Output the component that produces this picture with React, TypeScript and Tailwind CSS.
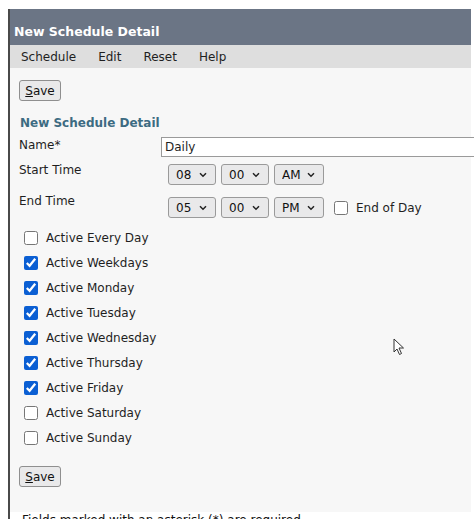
import { useState } from 'react'

const days = [
  { label: 'Active Every Day', checked: false },
  { label: 'Active Weekdays', checked: true },
  { label: 'Active Monday', checked: true },
  { label: 'Active Tuesday', checked: true },
  { label: 'Active Wednesday', checked: true },
  { label: 'Active Thursday', checked: true },
  { label: 'Active Friday', checked: true },
  { label: 'Active Saturday', checked: false },
  { label: 'Active Sunday', checked: false },
]

function SaveButton() {
  return (
    <button className="h-[21px] w-[42px] rounded-[3px] border border-[#8f8f8f] bg-[#e9e9ea] text-[12px] leading-none text-[#111]">
      <span className="underline">S</span>ave
    </button>
  )
}

function TimeSelect({ value, options, wide }: { value: string; options: string[]; wide?: boolean }) {
  return (
    <div className="relative">
      <select
        defaultValue={value}
        className={
          'h-[21px] appearance-none rounded-[3px] border border-[#9a9a9a] bg-[#e9e9ea] pl-[7px] text-[12px] text-[#111] outline-none ' +
          (wide ? 'w-[50px]' : 'w-[48px]')
        }
      >
        {options.map((o) => (
          <option key={o}>{o}</option>
        ))}
      </select>
      <svg
        className="pointer-events-none absolute right-[9px] top-[8px]"
        width="8"
        height="6"
        viewBox="0 0 8 6"
      >
        <path d="M1 1.2 L4 4.2 L7 1.2" fill="none" stroke="#222" strokeWidth="1.5" />
      </svg>
    </div>
  )
}

export default function App() {
  const [checks, setChecks] = useState(days.map((d) => d.checked))
  const [endOfDay, setEndOfDay] = useState(false)

  return (
    <div className="relative h-[519px] w-[474px] overflow-hidden bg-white pt-[9px] pl-[8px] pr-[3px] font-['DejaVu_Sans',Verdana,sans-serif] text-[12px] leading-[16px] text-[#1f1f1f]">
      <div className="border-l-2 border-[#4a4a4a]">
        {/* Title bar */}
        <div className="flex h-[36px] items-end bg-[#6b7585] pb-[5px] pl-[4px] text-[12.5px] font-bold leading-[16px] text-white">
          New Schedule Detail
        </div>

        {/* Menu */}
        <div className="flex h-[23px] items-center gap-[22px] bg-[#dedede] pl-[11px]">
          <span>Schedule</span>
          <span>Edit</span>
          <span>Reset</span>
          <span>Help</span>
        </div>

        <div className="bg-[#f7f7f7] pl-[9px] pb-[25px]">
          <div className="pt-[12px]">
            <SaveButton />
          </div>

          <div className="mt-[14px] pl-[1px] font-bold text-[#3d6b82]">New Schedule Detail</div>

          <div className="mt-[6px] flex items-start">
            <span className="w-[142px] shrink-0">Name*</span>
            <input
              defaultValue="Daily"
              className="-mr-[20px] h-[20px] w-[320px] shrink-0 border border-[#9a9a9a] bg-white pl-[3px] text-[12px] outline-none"
            />
          </div>

          <div className="mt-[5px] flex items-start">
            <span className="w-[149px]">Start Time</span>
            <div className="mt-[2px] flex gap-[5px]">
              <TimeSelect value="08" options={['08']} />
              <TimeSelect value="00" options={['00']} />
              <TimeSelect value="AM" options={['AM', 'PM']} wide />
            </div>
          </div>

          <div className="mt-[8px] flex items-start">
            <span className="w-[149px]">End Time</span>
            <div className="mt-[4px] flex items-center gap-[5px]">
              <TimeSelect value="05" options={['05']} />
              <TimeSelect value="00" options={['00']} />
              <TimeSelect value="PM" options={['AM', 'PM']} wide />
              <label className="ml-[5px] flex items-center gap-[8px]">
                <input
                  type="checkbox"
                  checked={endOfDay}
                  onChange={() => setEndOfDay(!endOfDay)}
                  className="m-0 h-[14px] w-[14px] accent-[#0b5fd3]"
                />
                End of Day
              </label>
            </div>
          </div>

          <div className="mt-[7px] flex flex-col pl-[5px]">
            {days.map((d, i) => (
              <label key={d.label} className="flex h-[25px] items-center gap-[8px]">
                <input
                  type="checkbox"
                  checked={checks[i]}
                  onChange={() => setChecks(checks.map((c, j) => (j === i ? !c : c)))}
                  className="m-0 h-[14px] w-[14px] accent-[#0b5fd3]"
                />
                {d.label}
              </label>
            ))}
          </div>

          <div className="mt-[16px]">
            <SaveButton />
          </div>
        </div>

        <div className="bg-white pl-[12px] text-[12px] text-[#111]">
          Fields marked with an asterisk (*) are required.
        </div>
      </div>

      {/* mouse pointer */}
      <svg className="absolute left-[393px] top-[338px]" width="12" height="18" viewBox="0 0 12 18">
        <path d="M1 1 L1 14 L4 11 L6.5 16.5 L8.5 15.5 L6 10 L10.5 10 Z" fill="white" stroke="#333" strokeWidth="1" strokeLinejoin="round" />
      </svg>
    </div>
  )
}
